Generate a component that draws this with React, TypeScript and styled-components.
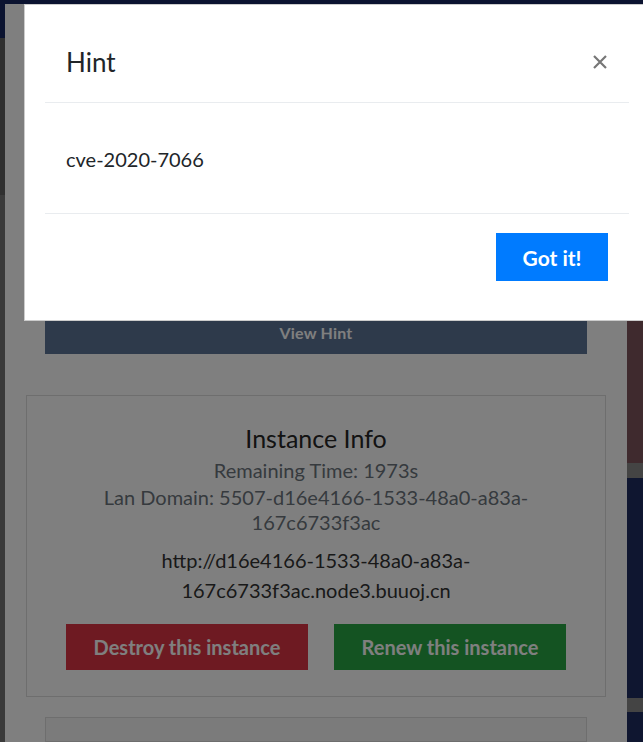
import React from "react";
import styled, { createGlobalStyle } from "styled-components";

const GlobalStyle = createGlobalStyle`
  html, body { margin: 0; padding: 0; }
  body {
    overflow: hidden;
    font-family: Lato, "Open Sans", "Liberation Sans", sans-serif;
    background: #162660;
  }
  * { box-sizing: border-box; }
`;

const Page = styled.div`
  position: relative;
  height: 742px;
  display: grid;
  grid-template-columns: 5px 622px 16px;
  overflow: hidden;
`;

const LeftStrip = styled.div`
  background: linear-gradient(
    to bottom,
    #162660 0 38px,
    #5e5e5e 38px 195px,
    #747474 195px
  );
`;

const RightStrip = styled.div`
  background: linear-gradient(
    to bottom,
    #162660 0 4px,
    #7e545c 4px 463px,
    #888888 463px 478px,
    #1e2c60 478px 698px,
    #888888 698px 712px,
    #1e2c60 712px
  );
`;

const Panel = styled.div`
  margin-top: 4px;
  background: #ffffff;
  display: flex;
  flex-direction: column;
  padding-top: 306px;
`;

const WideButton = styled.button`
  margin: 0 40px;
  height: 44px;
  border: none;
  background: #5c7496;
  color: #ffffff;
  font-family: Lato, sans-serif;
  font-weight: 700;
  font-size: 16px;
  letter-spacing: 0.2px;
`;

const Card = styled.div`
  margin: 41px 21px 0;
  border: 1px solid #dcdcdc;
  padding: 27px 30px 26px;
  display: flex;
  flex-direction: column;
  align-items: center;
  text-align: center;
`;

const CardTitle = styled.h4`
  margin: 0;
  font-weight: 400;
  font-size: 25px;
  line-height: 30px;
  color: #262626;
`;

const Muted = styled.div<{ $gap?: number }>`
  margin-top: ${(p) => p.$gap ?? 0}px;
  font-size: 20px;
  line-height: 25px;
  color: #6c757d;
  max-width: 450px;
`;

const Address = styled.p`
  margin: 10px 0 0;
  font-size: 20px;
  line-height: 30px;
  color: #333333;
  max-width: 340px;
  word-break: break-word;
`;

const ButtonRow = styled.div`
  display: flex;
  gap: 26px;
  margin-top: 19px;
`;

const ActionButton = styled.button<{ $tone: "danger" | "success"; $w: number }>`
  width: ${(p) => p.$w}px;
  height: 46px;
  border: none;
  background: ${(p) => (p.$tone === "danger" ? "#dc3545" : "#28a745")};
  color: #ffffff;
  font-family: Lato, sans-serif;
  font-weight: 700;
  font-size: 20px;
`;

const LowerCard = styled.div`
  margin: 20px 40px 0;
  flex: 1;
  background: #f7f7f7;
  border: 1px solid #dcdcdc;
`;

const Backdrop = styled.div`
  position: absolute;
  inset: 0;
  background: rgba(0, 0, 0, 0.5);
`;

const Modal = styled.div`
  position: absolute;
  top: 4px;
  left: 24px;
  width: 625px;
  background: #ffffff;
  border: 1px solid rgba(0, 0, 0, 0.2);
  display: flex;
  flex-direction: column;
`;

const ModalHeader = styled.div`
  margin: 0 19px 0 20px;
  padding: 41px 22px 24px 21px;
  border-bottom: 1px solid #e9ecef;
  display: flex;
  align-items: flex-start;
  justify-content: space-between;
`;

const ModalTitle = styled.h3`
  margin: 0;
  font-weight: 400;
  font-size: 26px;
  line-height: 32px;
  color: #212529;
`;

const CloseButton = styled.button`
  border: none;
  background: transparent;
  padding: 0;
  margin-top: 9px;
  width: 14px;
  height: 14px;
  display: flex;
`;

const ModalBody = styled.div`
  margin: 0 19px 0 20px;
  padding: 43px 21px 40px;
  border-bottom: 1px solid #e9ecef;
  font-size: 20px;
  line-height: 27px;
  color: #212529;
`;

const ModalFooter = styled.div`
  margin: 0 19px 0 20px;
  padding: 19px 21px 39px;
  display: flex;
  justify-content: flex-end;
`;

const PrimaryButton = styled.button`
  width: 112px;
  height: 48px;
  border: none;
  background: #007bff;
  color: #ffffff;
  font-family: Lato, sans-serif;
  font-weight: 700;
  font-size: 21px;
`;

export default function App() {
  return (
    <>
      <GlobalStyle />
      <Page>
        <LeftStrip />
        <Panel>
          <WideButton>View Hint</WideButton>
          <Card>
            <CardTitle>Instance Info</CardTitle>
            <Muted $gap={5}>Remaining Time: 1973s</Muted>
            <Muted $gap={2}>Lan Domain: 5507-d16e4166-1533-48a0-a83a-167c6733f3ac</Muted>
            <Address>http://d16e4166-1533-48a0-a83a-167c6733f3ac.node3.buuoj.cn</Address>
            <ButtonRow>
              <ActionButton $tone="danger" $w={242}>Destroy this instance</ActionButton>
              <ActionButton $tone="success" $w={232}>Renew this instance</ActionButton>
            </ButtonRow>
          </Card>
          <LowerCard />
        </Panel>
        <RightStrip />
        <Backdrop />
        <Modal>
          <ModalHeader>
            <ModalTitle>Hint</ModalTitle>
            <CloseButton aria-label="Close">
              <svg width="14" height="14" viewBox="0 0 14 14">
                <path d="M1 1 L13 13 M13 1 L1 13" stroke="#777" strokeWidth="2.2" />
              </svg>
            </CloseButton>
          </ModalHeader>
          <ModalBody>cve-2020-7066</ModalBody>
          <ModalFooter>
            <PrimaryButton>Got it!</PrimaryButton>
          </ModalFooter>
        </Modal>
      </Page>
    </>
  );
}
